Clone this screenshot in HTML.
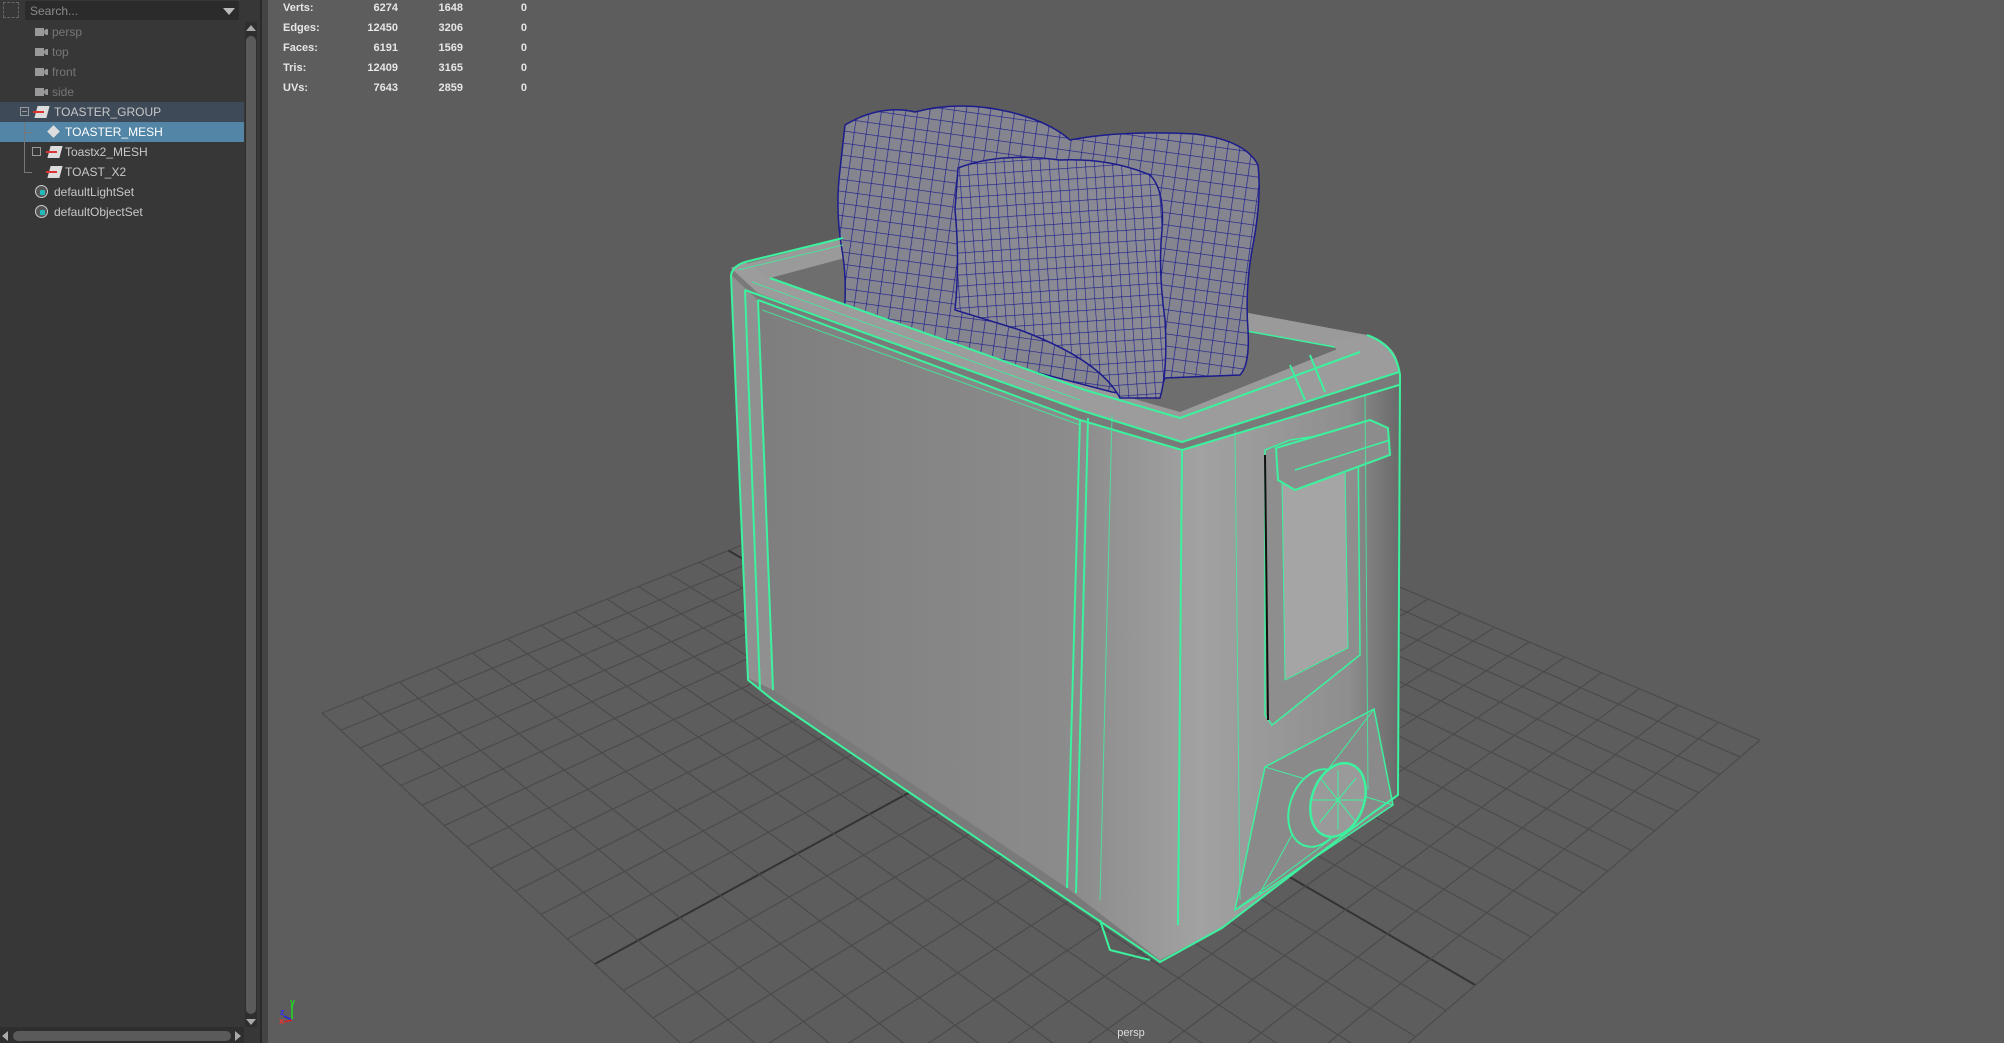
<!DOCTYPE html>
<html><head><meta charset="utf-8">
<style>
html,body{margin:0;padding:0;width:2004px;height:1043px;overflow:hidden;background:#5d5d5d;font-family:"Liberation Sans",sans-serif}
svg{display:block}
#out{position:absolute;left:0;top:0;width:260px;height:1043px;background:#373737}
#div{position:absolute;left:260px;top:0;width:8px;height:1043px;background:#444;border-left:2px solid #2a2a2a;box-sizing:border-box}
.row{position:absolute;left:0;width:244px;height:20px;font-size:12px;line-height:20px;color:#c8c8c8;white-space:nowrap}
.hud{position:absolute;font-size:11px;font-weight:bold;color:#e6e6e6}
.num{text-align:right;width:60px}
</style></head><body>
<div id="out">
  <div style="position:absolute;left:3px;top:2px;width:16px;height:16px;border:1px dashed #666;box-sizing:border-box"></div>
  <div style="position:absolute;left:25px;top:1px;width:214px;height:19px;background:#2b2b2b;border-radius:2px"></div>
  <div style="position:absolute;left:30px;top:2px;font-size:12px;line-height:18px;color:#8a8a8a">Search...</div>
  <div style="position:absolute;left:223px;top:8px;width:0;height:0;border-left:6px solid transparent;border-right:6px solid transparent;border-top:7px solid #bbb"></div>
  <div style="position:absolute;left:245px;top:22px;width:12px;height:1005px;background:#2e2e2e"></div>
  <div style="position:absolute;left:246px;top:36px;width:10px;height:978px;background:#5a5a5a;border-radius:5px"></div>
  <div style="position:absolute;left:246px;top:25px;border-left:5px solid transparent;border-right:5px solid transparent;border-bottom:6px solid #aaa"></div>
  <div style="position:absolute;left:246px;top:1019px;border-left:5px solid transparent;border-right:5px solid transparent;border-top:6px solid #aaa"></div>
  <div style="position:absolute;left:0;top:1027px;width:244px;height:16px;background:#2e2e2e"></div>
  <div style="position:absolute;left:13px;top:1031px;width:218px;height:10px;background:#5a5a5a;border-radius:5px"></div>
  <div style="position:absolute;left:2px;top:1031px;border-top:5px solid transparent;border-bottom:5px solid transparent;border-right:6px solid #aaa"></div>
  <div style="position:absolute;left:235px;top:1031px;border-top:5px solid transparent;border-bottom:5px solid transparent;border-left:6px solid #aaa"></div>

  <div class="row" style="top:22px;color:#777"><span style="position:absolute;left:35px;top:6px;width:9px;height:8px;background:#999"></span><span style="position:absolute;left:44px;top:7px;width:4px;height:6px;background:#999;border-radius:3px 0 0 3px"></span><span style="position:absolute;left:52px">persp</span></div>
  <div class="row" style="top:42px;color:#777"><span style="position:absolute;left:35px;top:6px;width:9px;height:8px;background:#999"></span><span style="position:absolute;left:44px;top:7px;width:4px;height:6px;background:#999;border-radius:3px 0 0 3px"></span><span style="position:absolute;left:52px">top</span></div>
  <div class="row" style="top:62px;color:#777"><span style="position:absolute;left:35px;top:6px;width:9px;height:8px;background:#999"></span><span style="position:absolute;left:44px;top:7px;width:4px;height:6px;background:#999;border-radius:3px 0 0 3px"></span><span style="position:absolute;left:52px">front</span></div>
  <div class="row" style="top:82px;color:#777"><span style="position:absolute;left:35px;top:6px;width:9px;height:8px;background:#999"></span><span style="position:absolute;left:44px;top:7px;width:4px;height:6px;background:#999;border-radius:3px 0 0 3px"></span><span style="position:absolute;left:52px">side</span></div>
  <div class="row" style="top:102px;background:#3e4a57"><span style="position:absolute;left:20px;top:5px;width:9px;height:9px;border:1px solid #999;box-sizing:border-box"></span><span style="position:absolute;left:22px;top:9px;width:5px;height:1px;background:#999"></span><span style="position:absolute;left:36px;top:4px;width:12px;height:12px;background:#ddd;transform:skewX(-15deg)"></span><span style="position:absolute;left:33px;top:9px;width:11px;height:2px;background:#d33"></span><span style="position:absolute;left:54px">TOASTER_GROUP</span></div>
  <div class="row" style="top:122px;background:#5285a6;color:#fff"><span style="position:absolute;left:24px;top:0;width:1px;height:20px;background:#777"></span><span style="position:absolute;left:24px;top:10px;width:8px;height:1px;background:#777"></span><span style="position:absolute;left:49px;top:5px;width:9px;height:9px;background:#ddd;transform:rotate(45deg)"></span><span style="position:absolute;left:65px">TOASTER_MESH</span></div>
  <div class="row" style="top:142px"><span style="position:absolute;left:24px;top:0;width:1px;height:20px;background:#777"></span><span style="position:absolute;left:32px;top:5px;width:9px;height:9px;border:1px solid #999;box-sizing:border-box"></span><span style="position:absolute;left:49px;top:4px;width:12px;height:12px;background:#ddd;transform:skewX(-15deg)"></span><span style="position:absolute;left:46px;top:9px;width:11px;height:2px;background:#d33"></span><span style="position:absolute;left:65px">Toastx2_MESH</span></div>
  <div class="row" style="top:162px"><span style="position:absolute;left:24px;top:0;width:1px;height:10px;background:#777"></span><span style="position:absolute;left:24px;top:10px;width:8px;height:1px;background:#777"></span><span style="position:absolute;left:49px;top:4px;width:12px;height:12px;background:#ddd;transform:skewX(-15deg)"></span><span style="position:absolute;left:46px;top:9px;width:11px;height:2px;background:#d33"></span><span style="position:absolute;left:65px">TOAST_X2</span></div>
  <div class="row" style="top:182px"><span style="position:absolute;left:35px;top:3px;width:13px;height:13px;border:1px solid #ccc;border-radius:50%;box-sizing:border-box;background:#555"></span><span style="position:absolute;left:40px;top:8px;width:5px;height:5px;background:#2bb;border-radius:1px"></span><span style="position:absolute;left:54px">defaultLightSet</span></div>
  <div class="row" style="top:202px"><span style="position:absolute;left:35px;top:3px;width:13px;height:13px;border:1px solid #ccc;border-radius:50%;box-sizing:border-box;background:#555"></span><span style="position:absolute;left:40px;top:8px;width:5px;height:5px;background:#2bb;border-radius:1px"></span><span style="position:absolute;left:54px">defaultObjectSet</span></div>
</div>
<div id="div"></div>

<svg width="2004" height="1043" style="position:absolute;left:0;top:0" xmlns="http://www.w3.org/2000/svg">
<defs>
  <clipPath id="vp"><rect x="268" y="0" width="1736" height="1043"/></clipPath>
  <pattern id="tg" width="12" height="12" patternUnits="userSpaceOnUse" patternTransform="rotate(8)">
    <rect width="12" height="12" fill="#858590"/>
    <path d="M0 0H12M0 0V12" stroke="#1c1c8c" stroke-width="1.3" fill="none"/>
  </pattern>
  <pattern id="tg2" width="9" height="11" patternUnits="userSpaceOnUse" patternTransform="rotate(-4)">
    <rect width="9" height="11" fill="#8a8a94"/>
    <path d="M0 0H9M0 0V11" stroke="#1c1c8c" stroke-width="1.2" fill="none"/>
  </pattern>
  <linearGradient id="side" x1="0" y1="0" x2="1" y2="0"><stop offset="0" stop-color="#7e7e7e"/><stop offset="1" stop-color="#8c8c8c"/></linearGradient>
  <linearGradient id="front" x1="0" y1="0" x2="1" y2="0"><stop offset="0" stop-color="#8a8a8a"/><stop offset=".4" stop-color="#a2a2a2"/><stop offset=".85" stop-color="#8e8e8e"/><stop offset="1" stop-color="#6a6a6a"/></linearGradient>
</defs>
<g clip-path="url(#vp)">
  <g id="grid" stroke="#4b4b4b" stroke-width="1.2" fill="none"></g>
  <!-- body silhouette -->
  <path d="M731 275 Q733 266 745 262 L843 238 L1367 335 Q1396 345 1400 375 L1398 795 L1370 815 L1222 928 L1160 962 L1150 955 L1095 918 L1068 900 L773 700 L748 680 Q741 500 731 275 Z" fill="#7a7a7a"/>
  <path d="M758 300 L1080 420 L1067 888 L773 690 Z" fill="url(#side)"/>
  <path d="M731 275 L758 300 L773 690 L748 678 Z" fill="#909090"/>
  <path d="M1080 420 L1182 450 L1399 385 L1398 795 L1222 928 L1160 960 L1067 888 Z" fill="url(#front)"/>
  <!-- top rim full (back part visible) -->
  <path d="M731 268 L843 238 L1367 335 Q1399 345 1399 372 L1182 442 L1080 410 L758 293 Z" fill="#9a9a9a"/>
  <!-- inner slot area -->
  <path d="M770 278 L845 258 L1340 348 L1180 412 L1085 385 Z" fill="#6e6e6e"/>
  <path d="M845 258 L1340 348" stroke="#3cf29e" stroke-width="1.5"/>
  <!-- toasts -->
  <path d="M845 125 Q880 104 915 112 Q960 100 1010 112 Q1050 122 1070 140 Q1120 130 1195 134 Q1245 140 1258 165 Q1262 200 1252 250 Q1245 290 1248 330 Q1250 365 1240 375 L1165 378 L1157 398 L1112 392 L843 322 Q848 285 842 250 Q835 210 840 170 Z" fill="url(#tg)" stroke="#1c1c8c" stroke-width="1.5"/>
  <path d="M958 168 Q1000 152 1060 160 Q1110 158 1150 175 Q1165 190 1162 230 Q1158 270 1165 320 Q1168 370 1160 398 L1120 398 Q1100 360 1020 330 L955 310 Q960 260 955 210 Z" fill="url(#tg2)" stroke="#1c1c8c" stroke-width="1.5"/>
  <!-- back rim over toast bottoms behind? no: front rim strip -->
  <path d="M731 268 L745 262 L770 278 L1085 390 L1180 418 L1360 352 L1367 335 Q1399 345 1399 372 L1182 442 L1080 410 L758 293 Z" fill="#9c9c9c"/>
  <path d="M1330 340 L1367 335 Q1399 345 1399 372 L1360 385 Z" fill="#9c9c9c"/>
  <!-- lever slot -->
  <path d="M1265 450 L1290 440 L1358 430 L1360 655 L1272 725 L1265 715 Z" fill="#8e8e8e" stroke="#3cf29e" stroke-width="1.5"/>
  <path d="M1265 455 L1268 720" stroke="#111" stroke-width="2"/>
  <path d="M1282 480 L1345 465 L1348 648 L1285 680 Z" fill="#a5a5a5" stroke="#3cf29e" stroke-width="1"/>
  <path d="M1276 448 L1370 420 L1388 428 L1390 455 L1295 490 L1278 480 Z" fill="#8c8c8c" stroke="#3cf29e" stroke-width="2"/>
  <path d="M1295 470 L1390 440" stroke="#3cf29e" stroke-width="1.5"/>
  <!-- knob panel -->
  <path d="M1265 767 L1374 709 L1393 805 L1259 895 L1235 910 Z" fill="#8a8a8a" stroke="#3cf29e" stroke-width="1.5"/>
  <path d="M1265 767 L1393 805 M1374 709 L1320 780 M1259 895 L1300 820 M1235 910 L1330 840" stroke="#3cf29e" stroke-width="1"/>
  <ellipse cx="1318" cy="808" rx="28" ry="40" transform="rotate(20 1318 808)" fill="#8a8a8a" stroke="#3cf29e" stroke-width="2"/>
  <ellipse cx="1338" cy="800" rx="26" ry="38" transform="rotate(20 1338 800)" fill="#9a9a9a" stroke="#3cf29e" stroke-width="2.5"/>
  <g stroke="#3cf29e" stroke-width="1"><path d="M1338 770 L1338 830 M1312 800 L1364 800 M1320 778 L1356 822 M1356 778 L1320 822"/></g>
  <!-- green wire edges -->
  <g stroke="#3cf29e" stroke-width="2" fill="none" stroke-linejoin="round">
    <path d="M731 275 Q733 266 745 262 L843 238"/>
    <path d="M731 275 Q741 500 748 680 L773 700 L1068 900 L1095 918 L1150 955 L1160 962 L1222 928 L1370 815 L1398 795 L1400 375 Q1396 345 1367 335"/>
    <path d="M758 300 L1080 420 L1182 450 L1399 385"/>
    <path d="M745 290 L1080 410 L1182 442 L1399 372"/>
    <path d="M770 278 L1085 390 L1180 418 L1360 352"/>
    <path d="M758 300 L773 690"/>
    <path d="M745 290 L760 690"/>
    <path d="M1080 420 L1067 888"/>
    <path d="M1088 418 L1076 893"/>
    <path d="M1182 450 L1178 925"/>
    <path d="M1290 365 L1305 400 M1310 355 L1325 392"/>
    <path d="M1100 920 L1110 950 L1150 960"/>
  </g>
  <g stroke="#3cf29e" stroke-width="1" fill="none" opacity=".8">
    <path d="M738 270 L843 245"/><path d="M1112 415 L1100 900"/><path d="M1235 430 L1240 900"/>
    <path d="M1365 395 L1368 790"/><path d="M762 310 L1080 425"/><path d="M752 282 L1080 400"/>
  </g>
  <g stroke-width="1.5"><path d="M292 1020 L292 1004" stroke="#2d2"/><path d="M292 1020 L284 1016" stroke="#22e"/><path d="M292 1020 L284 1022" stroke="#d22"/></g>
  <text x="290" y="1005" font-size="9" fill="#2d2" font-family="Liberation Sans" font-weight="bold">y</text>
  <text x="280" y="1015" font-size="9" fill="#33e" font-family="Liberation Sans" font-weight="bold">z</text>
  <text x="279" y="1024" font-size="9" fill="#e33" font-family="Liberation Sans" font-weight="bold">x</text>
</g>
<text x="1131" y="1036" font-size="11" fill="#ddd" text-anchor="middle" font-family="Liberation Sans">persp</text>
</svg>

<div class="hud" style="left:283px;top:2px">Verts:</div><div class="hud num" style="left:338px;top:2px">6274</div><div class="hud num" style="left:403px;top:2px">1648</div><div class="hud num" style="left:467px;top:2px">0</div>
<div class="hud" style="left:283px;top:22px">Edges:</div><div class="hud num" style="left:338px;top:22px">12450</div><div class="hud num" style="left:403px;top:22px">3206</div><div class="hud num" style="left:467px;top:22px">0</div>
<div class="hud" style="left:283px;top:42px">Faces:</div><div class="hud num" style="left:338px;top:42px">6191</div><div class="hud num" style="left:403px;top:42px">1569</div><div class="hud num" style="left:467px;top:42px">0</div>
<div class="hud" style="left:283px;top:62px">Tris:</div><div class="hud num" style="left:338px;top:62px">12409</div><div class="hud num" style="left:403px;top:62px">3165</div><div class="hud num" style="left:467px;top:62px">0</div>
<div class="hud" style="left:283px;top:82px">UVs:</div><div class="hud num" style="left:338px;top:82px">7643</div><div class="hud num" style="left:403px;top:82px">2859</div><div class="hud num" style="left:467px;top:82px">0</div>

<script>
(function(){
  var P=[[1030,430],[1760,740],[1032,1367],[322,713]];
  var x0=P[0][0],y0=P[0][1],x1=P[1][0],y1=P[1][1],x2=P[2][0],y2=P[2][1],x3=P[3][0],y3=P[3][1];
  var dx1=x1-x2,dx2=x3-x2,dy1=y1-y2,dy2=y3-y2,sx=x0-x1+x2-x3,sy=y0-y1+y2-y3;
  var den=dx1*dy2-dx2*dy1;
  var g=(sx*dy2-dx2*sy)/den,h=(dx1*sy-sx*dy1)/den;
  var a=x1-x0+g*x1,b=x3-x0+h*x3,c=x0,d=y1-y0+g*y1,e=y3-y0+h*y3,f=y0;
  function m(u,v){var w=g*u+h*v+1;return [(a*u+b*v+c)/w,(d*u+e*v+f)/w];}
  var N=24,s='';
  for(var i=0;i<=N;i++){
    var t=i/N,p=m(t,0),q=m(t,1),r=m(0,t),o=m(1,t);
    var col=(i==N/2)?' stroke="#333" stroke-width="2"':'';
    s+='<line x1="'+p[0]+'" y1="'+p[1]+'" x2="'+q[0]+'" y2="'+q[1]+'"'+col+'/>';
    s+='<line x1="'+r[0]+'" y1="'+r[1]+'" x2="'+o[0]+'" y2="'+o[1]+'"'+col+'/>';
  }
  document.getElementById('grid').innerHTML=s;
})();
</script>
</body></html>
